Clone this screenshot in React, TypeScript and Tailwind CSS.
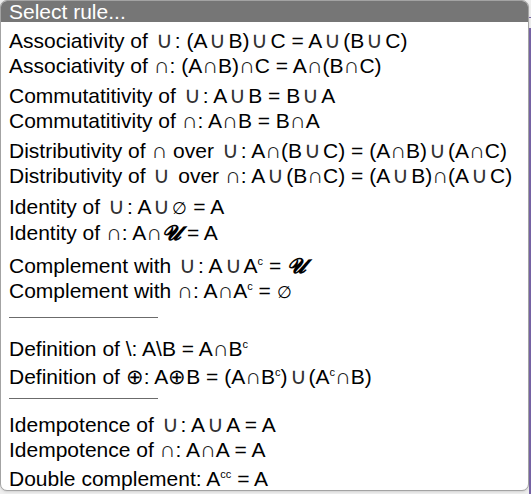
const SANS = "font-['Liberation_Sans',Arial,sans-serif]";
const THIN = "font-['DejaVu_Sans_ExtraLight','DejaVu_Sans',sans-serif] font-extralight";

function Cup() {
  return <span className={`${THIN} text-[23px] leading-none px-[2px] text-[#333]`}>∪</span>;
}

function Cap() {
  return <span className={`${THIN} text-[22px] leading-none text-[#222]`}>∩</span>;
}

function Sup({ children }: { children: React.ReactNode }) {
  return <span className="text-[11px] align-[8px]">{children}</span>;
}

function U() {
  return <span className="font-bold italic text-[21px] leading-none">𝓤</span>;
}

function Empty() {
  return <span className={`${THIN} text-[17px]`}>∅</span>;
}

function Row({ mt, children }: { mt: string; children: React.ReactNode }) {
  return <div className={`h-[25px] leading-[25px] whitespace-nowrap ${mt}`}>{children}</div>;
}

function Sep({ mt }: { mt: string }) {
  return (
    <div className={`h-[25px] flex items-center ${mt}`}>
      <div className="w-[149px] h-px bg-[#6b6b6b]" />
    </div>
  );
}

export default function App() {
  return (
    <div className={`w-[531px] h-[494px] bg-[#efefef] flex ${SANS}`}>
      <div className="w-[529px] h-[491px] bg-white border border-[#a3a3a3] rounded-[7px] overflow-hidden shadow-sm flex flex-col text-[21px] text-black">
        <div className="h-[21px] leading-[21px] bg-[#767676] text-white pl-[8px] shrink-0">Select rule...</div>
        <div className="pl-[8px] flex flex-col">
          <Row mt="mt-[6px]">Associativity of <Cup />: (A<Cup />B)<Cup />C = A<Cup />(B<Cup />C)</Row>
          <Row mt="mt-0">Associativity of <Cap />: (A<Cap />B)<Cap />C = A<Cap />(B<Cap />C)</Row>
          <Row mt="mt-[5px]">Commutatitivity of <Cup />: A<Cup />B = B<Cup />A</Row>
          <Row mt="mt-0">Commutatitivity of <Cap />: A<Cap />B = B<Cap />A</Row>
          <Row mt="mt-[5px]">Distributivity of <Cap /> over <Cup />: A<Cap />(B<Cup />C) = (A<Cap />B)<Cup />(A<Cap />C)</Row>
          <Row mt="mt-0">Distributivity of <Cup /> over <Cap />: A<Cup />(B<Cap />C) = (A<Cup />B)<Cap />(A<Cup />C)</Row>
          <Row mt="mt-[6px]">Identity of <Cup />: A<Cup /><Empty /> = A</Row>
          <Row mt="mt-px">Identity of <Cap />: A<Cap /><U /> = A</Row>
          <Row mt="mt-[4px]">Complement with <Cup />: A<Cup />A<Sup>c</Sup> = <U /></Row>
          <Row mt="mt-0">Complement with <Cap />: A<Cap />A<Sup>c</Sup> = <Empty /></Row>
          <Sep mt="mt-[6px]" />
          <Row mt="mt-[2px]">Definition of \: A\B = A<Cap />B<Sup>c</Sup></Row>
          <Row mt="mt-[3px]">Definition of <span className={THIN}>⊕</span>: A<span className={THIN}>⊕</span>B = (A<Cap />B<Sup>c</Sup>)<Cup />(A<Sup>c</Sup><Cap />B)</Row>
          <Sep mt="mt-px" />
          <Row mt="mt-px">Idempotence of <Cup />: A<Cup />A = A</Row>
          <Row mt="mt-0">Idempotence of <Cap />: A<Cap />A = A</Row>
          <Row mt="mt-0">Double complement: A<Sup>cc</Sup> = A</Row>
        </div>
      </div>
      <div className="w-[2px] flex flex-col">
        <div className="h-[17px]" />
        <div className="h-px bg-[#7562a3]" />
        <div className="h-[10px]" />
        <div className="flex-1 bg-[#7562a3]" />
      </div>
    </div>
  );
}
